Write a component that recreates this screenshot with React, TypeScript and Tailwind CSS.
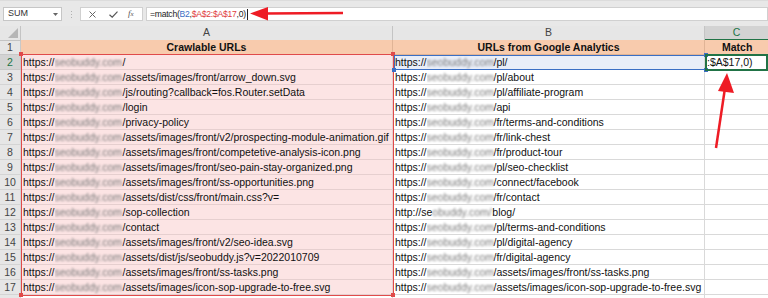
import React from "react";

const colA: string[] = [
  "/",
  "/assets/images/front/arrow_down.svg",
  "/js/routing?callback=fos.Router.setData",
  "/login",
  "/privacy-policy",
  "/assets/images/front/v2/prospecting-module-animation.gif",
  "/assets/images/front/competetive-analysis-icon.png",
  "/assets/images/front/seo-pain-stay-organized.png",
  "/assets/images/front/ss-opportunities.png",
  "/assets/dist/css/front/main.css?v=",
  "/sop-collection",
  "/contact",
  "/assets/images/front/v2/seo-idea.svg",
  "/assets/dist/js/seobuddy.js?v=2022010709",
  "/assets/images/front/ss-tasks.png",
  "/assets/images/icon-sop-upgrade-to-free.svg",
];

const colB: string[] = [
  "/pl/",
  "/pl/about",
  "/pl/affiliate-program",
  "/api",
  "/fr/terms-and-conditions",
  "/fr/link-chest",
  "/fr/product-tour",
  "/pl/seo-checklist",
  "/connect/facebook",
  "/fr/contact",
  "blog/",
  "/pl/terms-and-conditions",
  "/pl/digital-agency",
  "/fr/digital-agency",
  "/assets/images/front/ss-tasks.png",
  "/assets/images/icon-sop-upgrade-to-free.svg",
];

function Blur({ w, text }: { w: string; text: string }) {
  return (
    <span className={`inline-block overflow-hidden align-top ${w}`}>
      <span className="inline-block text-[#7a7a7a] blur-[1.3px]">{text}</span>
    </span>
  );
}

export default function App() {
  const font = { fontFamily: '"Liberation Sans", Arial, sans-serif' };
  return (
    <div
      className="relative w-[768px] h-[298px] overflow-hidden bg-white text-[10.5px] text-[#111]"
      style={font}
    >
      {/* Formula bar */}
      <div className="flex h-[26px] items-start bg-[#e8e8e8] pt-[6px] border-t border-[#dcdcdc]">
        <div className="ml-[3px] flex h-[14px] w-[59px] items-center justify-between border border-[#c6c6c6] bg-white pl-[4px] pr-[3px] text-[9px] text-[#333]">
          <span>SUM</span>
          <svg width="5" height="3" viewBox="0 0 5 3">
            <path d="M0 0 L5 0 L2.5 3 Z" fill="#666" />
          </svg>
        </div>
        <div className="flex h-[14px] w-[18px] flex-col items-center justify-center gap-[2px]">
          <span className="h-[1px] w-[1px] bg-[#b0b0b0]" />
          <span className="h-[1px] w-[1px] bg-[#b0b0b0]" />
          <span className="h-[1px] w-[1px] bg-[#b0b0b0]" />
        </div>
        <div className="flex h-[14px] w-[63px] items-center border border-[#d0d0d0] bg-white">
          <svg className="ml-[8px]" width="7" height="7" viewBox="0 0 7 7">
            <path d="M0.5 0.5 L6.5 6.5 M6.5 0.5 L0.5 6.5" stroke="#666" strokeWidth="1" />
          </svg>
          <svg className="ml-[13px]" width="9" height="7" viewBox="0 0 9 7">
            <path d="M0.5 3.8 L3.2 6.2 L8.5 0.6" stroke="#555" strokeWidth="1.2" fill="none" />
          </svg>
          <span className="ml-[10px] text-[9px] italic text-[#555]" style={{ fontFamily: '"Liberation Serif", serif' }}>
            f<span className="text-[7px]">x</span>
          </span>
        </div>
        <div className="ml-[3px] flex h-[14px] flex-1 items-center border border-[#d0d0d0] bg-white pl-[3px] text-[8.6px] tracking-[-0.25px] text-[#222]">
          <span>=match(</span>
          <span className="text-[#3b6fc4]">B2</span>
          <span>,</span>
          <span className="text-[#e03c3c]">$A$2:$A$17</span>
          <span>,0)</span>
          <span className="ml-[1px] h-[11px] w-[1px] bg-[#222]" />
        </div>
      </div>

      {/* Column headers */}
      <div className="grid h-[14px] grid-cols-[21px_372px_312px_1fr] bg-[#e6e6e6] text-[10.5px] leading-[13px] text-[#444]">
        <div className="relative border-r border-b border-[#c4c4c4]">
          <svg className="absolute right-[2px] bottom-[2px]" width="10" height="10" viewBox="0 0 10 10">
            <path d="M10 0 L10 10 L0 10 Z" fill="#b6b6b6" />
          </svg>
        </div>
        <div className="border-r border-b border-[#c4c4c4] text-center">A</div>
        <div className="border-r border-b border-[#c4c4c4] text-center">B</div>
        <div className="border-b-2 border-[#217346] bg-[#d3d3d3] text-center text-[#217346]">C</div>
      </div>

      {/* Row 1 */}
      <div className="grid h-[15px] grid-cols-[21px_372px_312px_1fr] leading-[14px]">
        <div className="border-r border-b border-[#c8c8c8] bg-[#e6e6e6] text-center text-[#444]">1</div>
        <div className="border-r border-b border-[#e0b496] bg-[#f8cbad] text-center font-bold">Crawlable URLs</div>
        <div className="border-r border-b border-[#e0b496] bg-[#f8cbad] text-center font-bold">URLs from Google Analytics</div>
        <div className="whitespace-nowrap border-b border-[#e0b496] bg-[#f8cbad] pl-[17px] font-bold">Match</div>
      </div>

      {/* Body */}
      <div className="relative">
        {colA.map((a, i) => {
          const row = i + 2;
          const b = colB[i];
          return (
            <div key={row} className="grid h-[15px] grid-cols-[21px_372px_312px_1fr] leading-[14px]">
              <div
                className={`border-r border-b text-center ${
                  row === 2
                    ? "border-[#c8c8c8] bg-[#d3d3d3] text-[#217346]"
                    : "border-[#d4d4d4] bg-[#e6e6e6] text-[#444]"
                }`}
              >
                {row}
              </div>
              <div className="overflow-hidden whitespace-nowrap border-r border-b border-[#e6cfcf] bg-[#fce4e4] pl-[2px]">
                https://
                <Blur w="w-[68px]" text="seobuddy.com" />
                {a}
              </div>
              <div
                className={`overflow-hidden whitespace-nowrap border-r border-b border-[#d9d9d9] pl-[2px] ${
                  row === 2 ? "bg-[#e9eef8]" : "bg-white"
                }`}
              >
                {row === 12 ? (
                  <>
                    http://se
                    <Blur w="w-[60px]" text="obuddy.com/" />
                    {b}
                  </>
                ) : (
                  <>
                    https://
                    <Blur w="w-[67px]" text="seobuddy.com" />
                    {b}
                  </>
                )}
              </div>
              <div className="overflow-hidden whitespace-nowrap border-b border-[#d9d9d9] bg-white pl-[2px]">
                {row === 2 ? ":$A$17,0)" : ""}
              </div>
            </div>
          );
        })}
        <div className="grid h-[15px] grid-cols-[21px_372px_312px_1fr]">
          <div className="border-r border-[#d4d4d4] bg-[#e6e6e6]" />
          <div className="border-r border-[#d9d9d9]" />
          <div className="border-r border-[#d9d9d9]" />
          <div />
        </div>

        {/* Range highlight: A2:A17 (red) */}
        <div className="pointer-events-none absolute left-[21px] top-[-1px] h-[242px] w-[373px] border border-[#e04a4a]" />
        <div className="pointer-events-none absolute left-[19px] top-[-3px] h-[4px] w-[4px] bg-[#e04a4a]" />
        <div className="pointer-events-none absolute left-[391px] top-[-3px] h-[4px] w-[4px] bg-[#e04a4a]" />
        <div className="pointer-events-none absolute left-[19px] top-[238px] h-[4px] w-[4px] bg-[#e04a4a]" />
        <div className="pointer-events-none absolute left-[391px] top-[238px] h-[4px] w-[4px] bg-[#e04a4a]" />

        {/* B2 (blue) */}
        <div className="pointer-events-none absolute left-[394px] top-[0px] h-[15px] w-[312px] border border-[#3b6fc4]" />
        <div className="pointer-events-none absolute left-[392px] top-[13px] h-[4px] w-[4px] bg-[#3b6fc4]" />
        <div className="pointer-events-none absolute left-[704px] top-[-2px] h-[4px] w-[4px] bg-[#3b6fc4]" />
        <div className="pointer-events-none absolute left-[704px] top-[13px] h-[4px] w-[4px] bg-[#3b6fc4]" />

        {/* C2 active (green) */}
        <div className="pointer-events-none absolute left-[705px] top-[-1px] h-[17px] w-[63px] border-2 border-[#217346]" />
      </div>

      {/* Red arrows */}
      <svg className="pointer-events-none absolute left-0 top-0" width="768" height="298" viewBox="0 0 768 298">
        <line x1="264" y1="13.5" x2="343" y2="13" stroke="#ee1c25" strokeWidth="2.5" />
        <polygon points="250,13.5 268,7 268,20.5" fill="#ee1c25" />
        <line x1="716" y1="148" x2="725" y2="88" stroke="#ee1c25" strokeWidth="2.5" />
        <polygon points="727,73 718,91 734,93" fill="#ee1c25" />
      </svg>
    </div>
  );
}
